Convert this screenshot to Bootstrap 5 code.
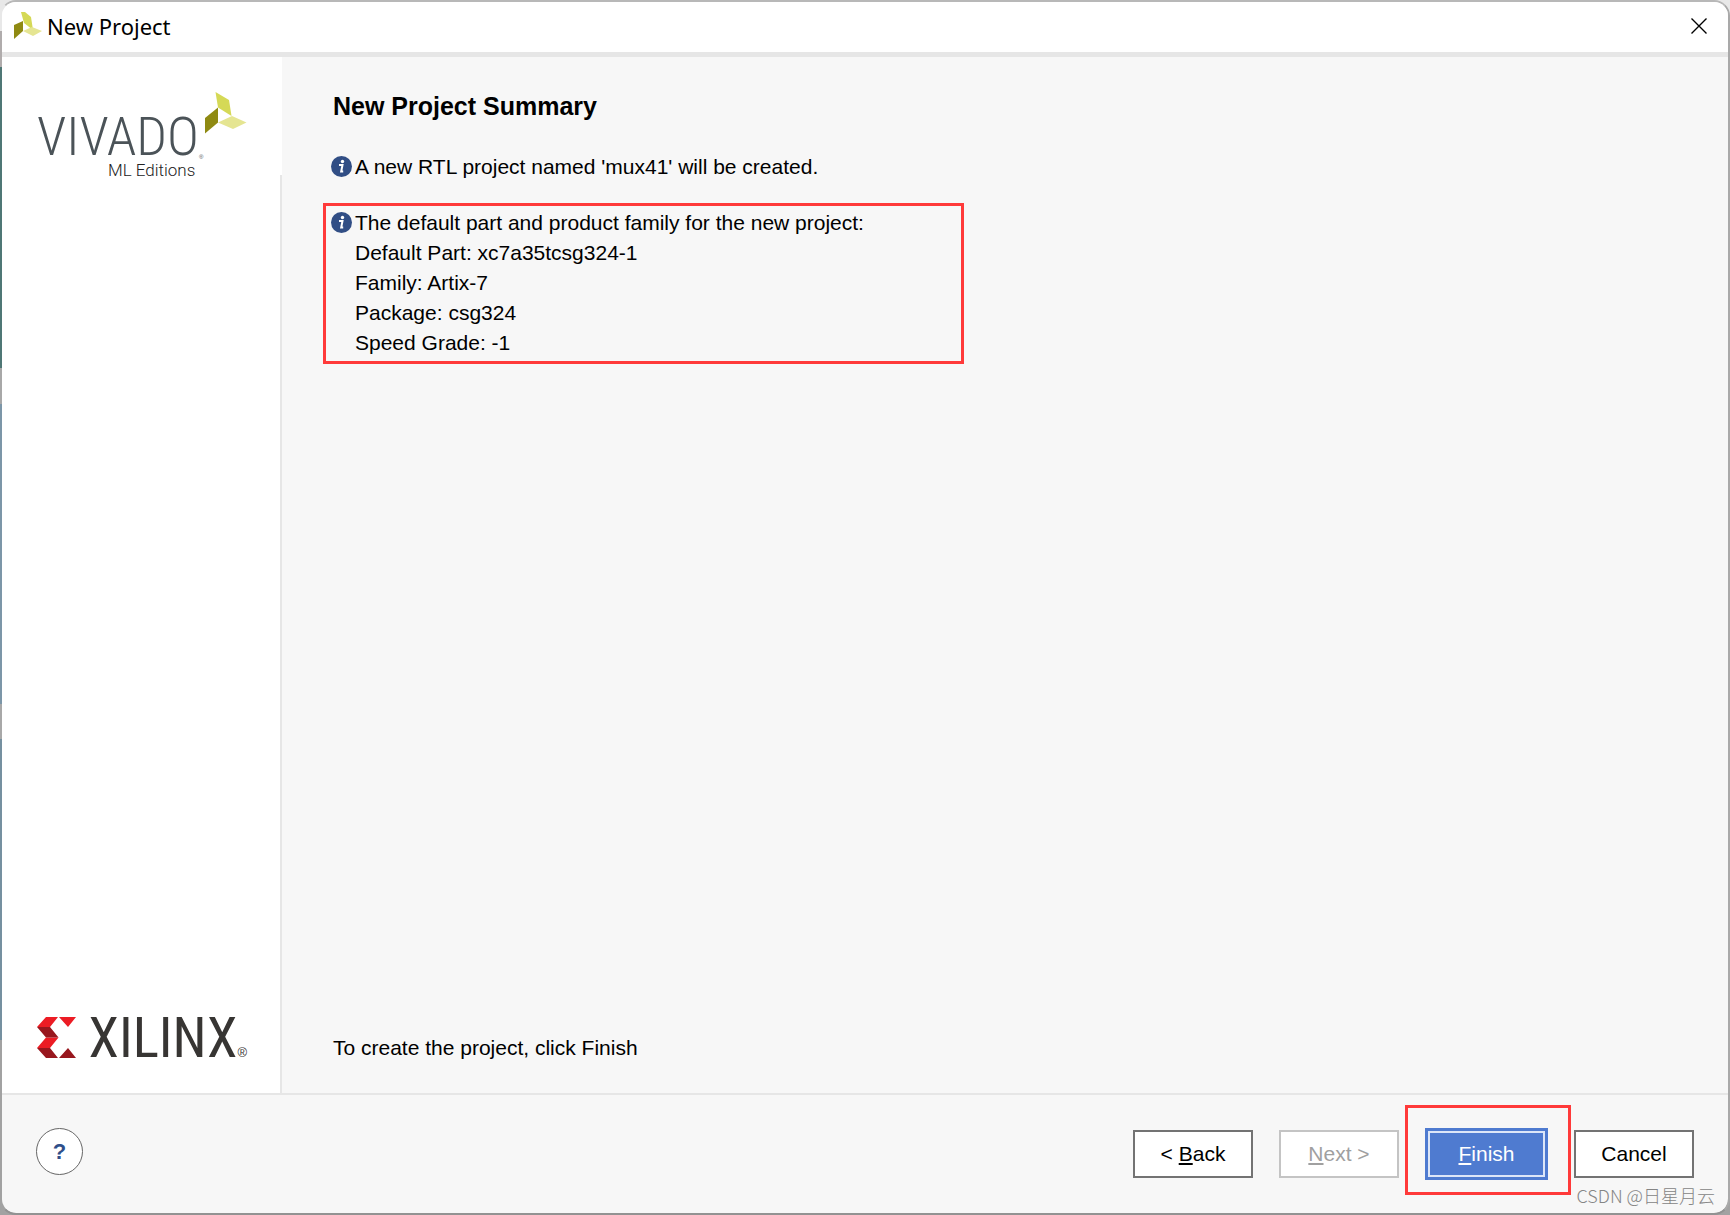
<!DOCTYPE html>
<html lang="en">
<head>
<meta charset="utf-8">
<meta name="viewport" content="width=device-width, initial-scale=1">
<title>New Project</title>
<link href="https://cdn.jsdelivr.net/npm/bootstrap@5.3.0/dist/css/bootstrap.min.css" rel="stylesheet">
<style>
  body {
    font-family: "Liberation Sans", Arial, sans-serif;
    font-size: 21px;
    line-height: 30px;
    color: #000;
    background: linear-gradient(#e8e8e8 31px, #b0acac 31px 67px, #4f7775 67px 368px, #a8a8a8 368px 404px, #7c96a8 404px 704px, #a8a8a8 704px 739px, #7590a0 739px 1040px, #a2a2a2 1040px);
  }
  .wizard { background: #f7f7f7 padding-box; border: 2px solid; border-color: #b8b8b8 #a9a9a9 #929292 transparent; border-radius: 16px; }
  .title-row { height: 55px; border-bottom: 5px solid #e6e6e6; padding: 0 13px 2px 11px; border-radius: 14px 14px 0 0; }
  .title-row h1 { font: 22px/30px "Noto Sans", sans-serif; margin-left: 5px; }
  .close-btn { line-height: 0; color: #000; }
  .side-pane { width: 280px; border-right: 2px solid #e6e6e6; padding: 0 33px 35px 35px; }
  .brand-top { margin-right: -35px; padding: 35px 35px 0 0; height: 118px; }
  .name-col { padding-top: 20px; }
  .vivado-name { font: 300 54px/50px "Roboto Condensed", Roboto, sans-serif; color: #4b5358; }
  .edition { font: 300 17px/16px Roboto, sans-serif; color: #222; padding-right: 8px; }
  .xilinx-name { font: 55px/40px "Roboto Condensed", Roboto, sans-serif; color: #373533; }
  .reg-sign { font: 13px/10px "Liberation Sans", sans-serif; color: #373533; }
  .reg-tiny { font: 6px/10px "Liberation Sans", sans-serif; color: #4b5358; }
  .content-pane { padding: 34px 50px 30px 51px; }
  .content-pane h2 { font-size: 25px; line-height: 30px; margin-bottom: 31px; }
  .info-row { gap: 3px; margin-left: -2px; }
  .info-row svg { flex: none; margin-top: 4px; }
  .part-box { width: 641px; margin: 21px 0 0 -10px; padding: 2px 5px 3px; border: 3px solid #ff3a3a; }
  .action-row { min-height: 120px; border-top: 2px solid #e6e6e6; padding: 33px 34px 0 34px; }
  .btn-group-row { gap: 26px; }
  .help-btn { width: 47px; height: 47px; border: 1px solid #666; background: #fff; color: #2f4f8a; font-size: 22px; }
  .wiz-btn { width: 120px; height: 48px; border: 2px solid #737373; background: #fff; color: #000; font-size: 21px; line-height: 30px; padding: 0; }
  .wiz-btn:disabled { border-color: #c4c4c4; color: #a0a0a0; }
  .wiz-main { display: block; width: 123px; height: 52px; border: 3px solid #4f7bd0; background: #4f7bd0; color: #fff; box-shadow: inset 0 0 0 2px #dce6f8; }
  .finish-mark::after { content: ""; position: absolute; inset: -23px -23px -15px -20px; border: 3px solid #ff3a3a; pointer-events: none; }
  .credit { right: 13px; bottom: 6px; font: 300 18px/24px "Noto Sans CJK SC", sans-serif; color: #858585; }
</style>
</head>
<body>
<div class="min-vh-100 d-flex">
  <div class="wizard flex-grow-1 d-flex flex-column position-relative">
    <header class="title-row bg-white d-flex align-items-center">
      <svg width="29" height="28" viewBox="0 0 29 28" aria-hidden="true"><path fill="#d5d956" d="M8 0h4l6 5 2 13-9-7z"/><path fill="#8f8a12" d="M1 13l9-4v10l-9 8z"/><path fill="#e5e592" d="M10 19l9-4 10 4-9 5z"/></svg>
      <h1 class="mb-0">New Project</h1>
      <button type="button" class="close-btn btn border-0 p-2 ms-auto" aria-label="Close"><svg width="16" height="16" viewBox="0 0 16 16" fill="none" stroke="currentColor" stroke-width="1.4"><path d="M.5.5l15 15M15.500.5l-15 15"/></svg></button>
    </header>
    <div class="flex-grow-1 d-flex">
      <aside class="side-pane bg-white flex-shrink-0 d-flex flex-column justify-content-between">
        <div class="brand-top bg-white d-flex justify-content-between">
          <div class="name-col text-end">
            <div class="d-flex align-items-end"><span class="vivado-name">VIVADO</span><span class="reg-tiny">®</span></div>
            <div class="edition">ML Editions</div>
          </div>
          <svg class="flex-shrink-0" width="42" height="42" viewBox="0 0 42 42" aria-hidden="true"><path fill="#d5d956" d="M10.500 0L24 8l2.500 16L13 15.500z"/><path fill="#8f8a12" d="M0 26l13-10.500v15L0 41.500z"/><path fill="#e5e592" d="M13 30.500L27 24l14.500 6.500L28 37z"/></svg>
        </div>
        <div class="d-flex align-items-end justify-content-between">
          <svg class="flex-shrink-0" width="39" height="41" viewBox="0 0 39 41" aria-hidden="true"><path fill="#ec1c24" d="M9 0h12L13 10H0zM22 0h17l-8 10zM9 20.500h12.500L13 31H0z"/><path fill="#98171e" d="M0 10h13l8.500 10.500H9zM0 31h13l8 10H9zM31 31l8 10H22z"/></svg>
          <span class="d-flex align-items-end"><span class="xilinx-name">XILINX</span><span class="reg-sign">®</span></span>
        </div>
      </aside>
      <main class="content-pane flex-grow-1 d-flex flex-column">
        <h2 class="fw-bold">New Project Summary</h2>
        <div class="info-row d-flex">
          <svg width="21" height="21" viewBox="0 0 21 21" aria-hidden="true"><circle cx="10.500" cy="10.500" r="10.500" fill="#314e85"/><circle cx="11.500" cy="5.500" r="1.700" fill="#fff"/><path d="M8 9h3.500l-1.300 6.500h2" fill="none" stroke="#fff" stroke-width="2"/></svg>
          <p class="mb-0">A new RTL project named 'mux41' will be created.</p>
        </div>
        <section class="info-row part-box d-flex">
          <svg width="21" height="21" viewBox="0 0 21 21" aria-hidden="true"><circle cx="10.500" cy="10.500" r="10.500" fill="#314e85"/><circle cx="11.500" cy="5.500" r="1.700" fill="#fff"/><path d="M8 9h3.500l-1.300 6.500h2" fill="none" stroke="#fff" stroke-width="2"/></svg>
          <div>
            <div>The default part and product family for the new project:</div>
            <div>Default Part: xc7a35tcsg324-1</div>
            <div>Family: Artix-7</div>
            <div>Package: csg324</div>
            <div>Speed Grade: -1</div>
          </div>
        </section>
        <p class="mt-auto mb-0">To create the project, click Finish</p>
      </main>
    </div>
    <footer class="action-row d-flex align-items-start">
      <button type="button" class="help-btn rounded-circle fw-bold p-0" aria-label="Help">?</button>
      <div class="btn-group-row ms-auto d-flex align-items-center">
        <button type="button" class="wiz-btn">&lt; <u>B</u>ack</button>
        <button type="button" class="wiz-btn" disabled><u>N</u>ext &gt;</button>
        <div class="finish-mark position-relative"><button type="button" class="wiz-btn wiz-main"><u>F</u>inish</button></div>
        <button type="button" class="wiz-btn">Cancel</button>
      </div>
    </footer>
    <div class="credit position-absolute">CSDN @日星月云</div>
  </div>
</div>
<script src="https://cdn.jsdelivr.net/npm/bootstrap@5.3.0/dist/js/bootstrap.bundle.min.js"></script>
</body>
</html>
